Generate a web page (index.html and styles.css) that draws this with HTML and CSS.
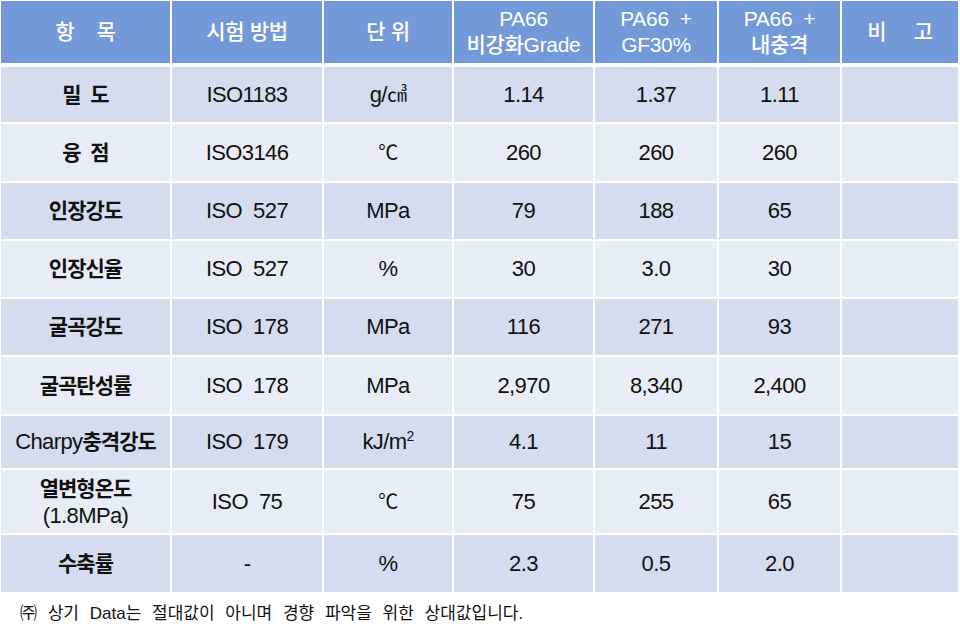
FILE: index.html
```html
<!DOCTYPE html>
<html lang="ko">
<head>
<meta charset="utf-8">
<title>PA66 물성표</title>
<link rel="stylesheet" href="styles.css">
</head>
<body>
<div class="page">
  <div class="grid head">
    <div class="cell">항    목</div>
    <div class="cell">시험 방법</div>
    <div class="cell">단 위</div>
    <div class="cell">PA66<br>비강화Grade</div>
    <div class="cell">PA66  +<br>GF30%</div>
    <div class="cell">PA66  +<br>내충격</div>
    <div class="cell">비     고</div>
  </div>
  <div class="grid body">
    <div class="cell dark ko">밀  도</div>
    <div class="cell dark">ISO1183</div>
    <div class="cell dark"><span>g/<span class="unit">㎤</span></span></div>
    <div class="cell dark">1.14</div>
    <div class="cell dark">1.37</div>
    <div class="cell dark">1.11</div>
    <div class="cell dark"></div>

    <div class="cell light ko">융  점</div>
    <div class="cell light">ISO3146</div>
    <div class="cell light"><span class="unit">℃</span></div>
    <div class="cell light">260</div>
    <div class="cell light">260</div>
    <div class="cell light">260</div>
    <div class="cell light"></div>

    <div class="cell dark ko">인장강도</div>
    <div class="cell dark">ISO  527</div>
    <div class="cell dark">MPa</div>
    <div class="cell dark">79</div>
    <div class="cell dark">188</div>
    <div class="cell dark">65</div>
    <div class="cell dark"></div>

    <div class="cell light ko">인장신율</div>
    <div class="cell light">ISO  527</div>
    <div class="cell light">%</div>
    <div class="cell light">30</div>
    <div class="cell light">3.0</div>
    <div class="cell light">30</div>
    <div class="cell light"></div>

    <div class="cell dark ko">굴곡강도</div>
    <div class="cell dark">ISO  178</div>
    <div class="cell dark">MPa</div>
    <div class="cell dark">116</div>
    <div class="cell dark">271</div>
    <div class="cell dark">93</div>
    <div class="cell dark"></div>

    <div class="cell light ko">굴곡탄성률</div>
    <div class="cell light">ISO  178</div>
    <div class="cell light">MPa</div>
    <div class="cell light">2,970</div>
    <div class="cell light">8,340</div>
    <div class="cell light">2,400</div>
    <div class="cell light"></div>

    <div class="cell dark ko"><span><span class="lat">Charpy</span>충격강도</span></div>
    <div class="cell dark">ISO  179</div>
    <div class="cell dark"><span>kJ/m<sup>2</sup></span></div>
    <div class="cell dark">4.1</div>
    <div class="cell dark">11</div>
    <div class="cell dark">15</div>
    <div class="cell dark"></div>

    <div class="cell light ko two"><span>열변형온도<br><span class="lat">(1.8MPa)</span></span></div>
    <div class="cell light">ISO  75</div>
    <div class="cell light"><span class="unit">℃</span></div>
    <div class="cell light">75</div>
    <div class="cell light">255</div>
    <div class="cell light">65</div>
    <div class="cell light"></div>

    <div class="cell dark ko">수축률</div>
    <div class="cell dark">-</div>
    <div class="cell dark">%</div>
    <div class="cell dark">2.3</div>
    <div class="cell dark">0.5</div>
    <div class="cell dark">2.0</div>
    <div class="cell dark"></div>
  </div>
  <p class="note">㈜ 상기 Data는 절대값이 아니며 경향 파악을 위한 상대값입니다.</p>
</div>
</body>
</html>
```

FILE: styles.css
```css
html, body {
  margin: 0;
  padding: 0;
  background: #ffffff;
}

.page {
  padding: 1px 0 0 1px;
  font-family: "Liberation Sans", "Noto Sans CJK KR", sans-serif;
  font-weight: 500;
  color: #111111;
}

.grid {
  display: grid;
  grid-template-columns: 169px 150px 128px 139px 122px 121px 116px;
  column-gap: 2px;
  row-gap: 2px;
}

.head {
  grid-template-rows: 62px;
  margin-bottom: 4px;
}

.body {
  grid-template-rows: 55px 57px 56px 56px 56px 57px 52px 63px 57px;
}

.cell {
  display: flex;
  align-items: center;
  justify-content: center;
  text-align: center;
  white-space: pre;
  font-size: 22px;
  letter-spacing: -0.6px;
  line-height: 26px;
}

.head .cell {
  background: #7399d8;
  color: #ffffff;
  font-size: 21px;
  letter-spacing: -0.3px;
  font-weight: 500;
}

.dark {
  background: #d5dcef;
}

.light {
  background: #e9ecf6;
}

.ko {
  font-size: 21px;
  letter-spacing: -1px;
  font-weight: 700;
}

.lat {
  font-weight: 400;
  font-size: 22px;
  letter-spacing: -0.6px;
}

.two {
  line-height: 27px;
}

.unit {
  font-family: "Liberation Serif", "Noto Sans CJK KR", serif;
  font-weight: 400;
  font-size: 20px;
}

sup {
  font-size: 14px;
  line-height: 0;
  vertical-align: 8px;
}

.note {
  margin: 10px 0 0 19px;
  font-size: 17px;
  line-height: 24px;
  word-spacing: 6px;
  font-weight: 400;
  color: #111111;
}
```
